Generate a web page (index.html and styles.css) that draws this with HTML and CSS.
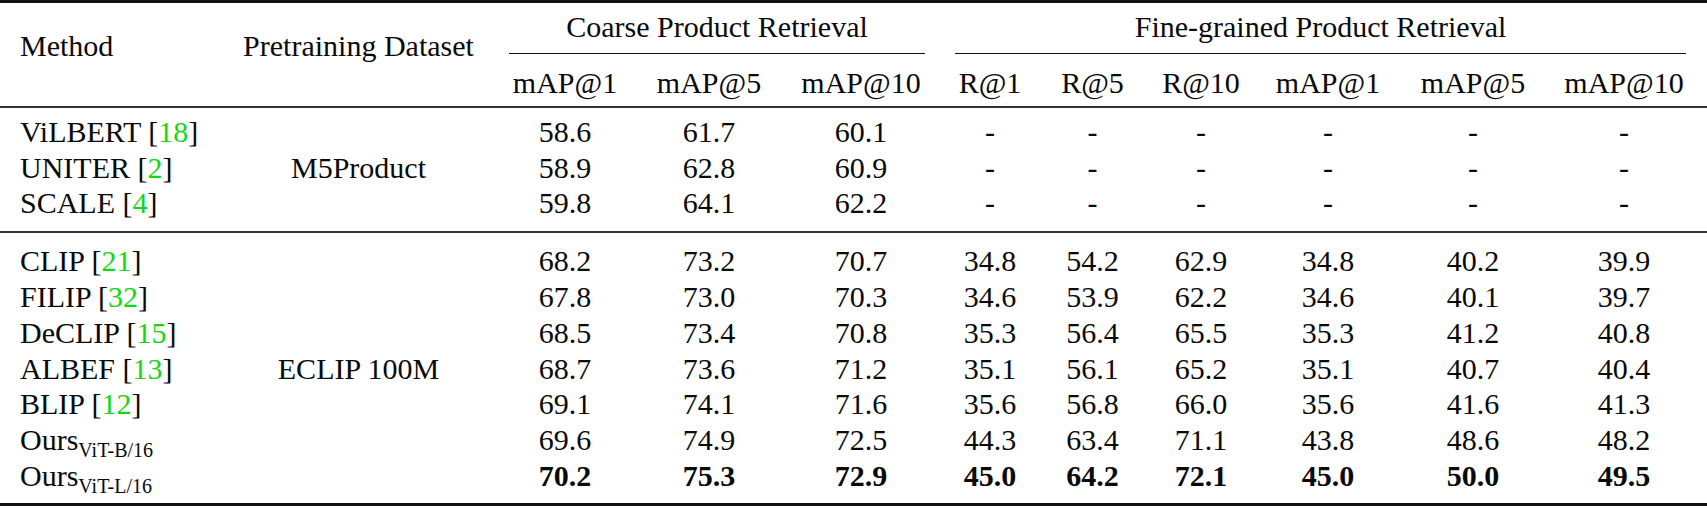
FILE: index.html
```html
<!DOCTYPE html>
<html lang="en">
<head>
    <meta charset="UTF-8">
    <meta name="viewport" content="width=device-width, initial-scale=1.0">
    <title>Product Retrieval Results</title>
    <link rel="stylesheet" href="styles.css">
</head>
<body>
    <div class="table-wrap">
        <table class="results">
            <colgroup>
                <col class="col-method">
                <col class="col-dataset">
                <col class="col-c1">
                <col class="col-c5">
                <col class="col-c10">
                <col class="col-r1">
                <col class="col-r5">
                <col class="col-r10">
                <col class="col-f1">
                <col class="col-f5">
                <col class="col-f10">
            </colgroup>
            <thead>
                <tr class="group-row">
                    <th rowspan="2" class="method-head">Method</th>
                    <th rowspan="2" class="dataset-head">Pretraining Dataset</th>
                    <th colspan="3" class="group"><div class="group-label">Coarse Product Retrieval</div></th>
                    <th colspan="6" class="group"><div class="group-label">Fine-grained Product Retrieval</div></th>
                </tr>
                <tr class="metric-row">
                    <th>mAP@1</th>
                    <th>mAP@5</th>
                    <th>mAP@10</th>
                    <th>R@1</th>
                    <th>R@5</th>
                    <th>R@10</th>
                    <th>mAP@1</th>
                    <th>mAP@5</th>
                    <th>mAP@10</th>
                </tr>
            </thead>

            <!-- M5Product 사전학습 -->
            <tbody class="block block-first">
                <tr>
                    <td class="method">ViLBERT [<span class="cite">18</span>]</td>
                    <td rowspan="3" class="dataset">M5Product</td>
                    <td>58.6</td><td>61.7</td><td>60.1</td>
                    <td>-</td><td>-</td><td>-</td><td>-</td><td>-</td><td>-</td>
                </tr>
                <tr>
                    <td class="method">UNITER [<span class="cite">2</span>]</td>
                    <td>58.9</td><td>62.8</td><td>60.9</td>
                    <td>-</td><td>-</td><td>-</td><td>-</td><td>-</td><td>-</td>
                </tr>
                <tr>
                    <td class="method">SCALE [<span class="cite">4</span>]</td>
                    <td>59.8</td><td>64.1</td><td>62.2</td>
                    <td>-</td><td>-</td><td>-</td><td>-</td><td>-</td><td>-</td>
                </tr>
            </tbody>

            <!-- ECLIP 100M 사전학습 -->
            <tbody class="block block-second">
                <tr>
                    <td class="method">CLIP [<span class="cite">21</span>]</td>
                    <td rowspan="7" class="dataset">ECLIP 100M</td>
                    <td>68.2</td><td>73.2</td><td>70.7</td>
                    <td>34.8</td><td>54.2</td><td>62.9</td><td>34.8</td><td>40.2</td><td>39.9</td>
                </tr>
                <tr>
                    <td class="method">FILIP [<span class="cite">32</span>]</td>
                    <td>67.8</td><td>73.0</td><td>70.3</td>
                    <td>34.6</td><td>53.9</td><td>62.2</td><td>34.6</td><td>40.1</td><td>39.7</td>
                </tr>
                <tr>
                    <td class="method">DeCLIP [<span class="cite">15</span>]</td>
                    <td>68.5</td><td>73.4</td><td>70.8</td>
                    <td>35.3</td><td>56.4</td><td>65.5</td><td>35.3</td><td>41.2</td><td>40.8</td>
                </tr>
                <tr>
                    <td class="method">ALBEF [<span class="cite">13</span>]</td>
                    <td>68.7</td><td>73.6</td><td>71.2</td>
                    <td>35.1</td><td>56.1</td><td>65.2</td><td>35.1</td><td>40.7</td><td>40.4</td>
                </tr>
                <tr>
                    <td class="method">BLIP [<span class="cite">12</span>]</td>
                    <td>69.1</td><td>74.1</td><td>71.6</td>
                    <td>35.6</td><td>56.8</td><td>66.0</td><td>35.6</td><td>41.6</td><td>41.3</td>
                </tr>
                <tr>
                    <td class="method">Ours<span class="sub">ViT-B/16</span></td>
                    <td>69.6</td><td>74.9</td><td>72.5</td>
                    <td>44.3</td><td>63.4</td><td>71.1</td><td>43.8</td><td>48.6</td><td>48.2</td>
                </tr>
                <tr class="best">
                    <td class="method">Ours<span class="sub">ViT-L/16</span></td>
                    <td>70.2</td><td>75.3</td><td>72.9</td>
                    <td>45.0</td><td>64.2</td><td>72.1</td><td>45.0</td><td>50.0</td><td>49.5</td>
                </tr>
            </tbody>
        </table>
    </div>
</body>
</html>
```

FILE: styles.css
```css
* {
    margin: 0;
    padding: 0;
    box-sizing: border-box;
}

body {
    font-family: 'Liberation Serif', 'Times New Roman', serif;
    font-size: 30px;
    color: #0a0a0a;
    background-color: #fff;
}

/* 표 바깥 굵은 선 (toprule / bottomrule) */
.table-wrap {
    width: 1707px;
    border-top: 3px solid #111;
    border-bottom: 3px solid #111;
}

.results {
    width: 100%;
    border-collapse: separate;
    border-spacing: 0;
    table-layout: fixed;
    line-height: 35.8px;
}

.col-method { width: 223px; }
.col-dataset { width: 271px; }
.col-c1 { width: 142px; }
.col-c5 { width: 146px; }
.col-c10 { width: 158px; }
.col-r1 { width: 100px; }
.col-r5 { width: 105px; }
.col-r10 { width: 112px; }
.col-f1 { width: 142px; }
.col-f5 { width: 148px; }
.col-f10 { width: 160px; }

th,
td {
    font-weight: normal;
    text-align: center;
    vertical-align: top;
    white-space: nowrap;
    padding: 0;
}

tr > :last-child {
    padding-right: 6px;
}

/* 헤더 */
.group-row .group {
    padding-top: 6.2px;
}

.group-label {
    margin: 0 15px;
    padding-bottom: 8px;
    border-bottom: 1px solid #111;
}

.method-head,
.dataset-head {
    padding-top: 24.5px;
    border-bottom: 2px solid #333;
}

.method-head,
.method {
    text-align: left;
    padding-left: 20px;
}

.metric-row th {
    padding-top: 10.7px;
    padding-bottom: 6px;
    border-bottom: 2px solid #333;
}

/* 본문 블록 */
.block-first tr:first-child td {
    padding-top: 5.3px;
}

.block-first tr:last-child td {
    padding-bottom: 10.3px;
    border-bottom: 2px solid #333;
}

.block-first .dataset {
    padding-bottom: 10.3px;
    border-bottom: 2px solid #333;
}

.block-second tr:first-child td {
    padding-top: 9.7px;
}

.block-second tr:last-child td {
    padding-bottom: 9.7px;
}

.block-second .dataset {
    padding-bottom: 9.7px;
}

.results .dataset {
    vertical-align: middle;
}

.cite {
    color: #12d812;
}

.sub {
    font-size: 20px;
    line-height: 0;
    vertical-align: -7px;
}

.best td:not(.method) {
    font-weight: bold;
}
```
